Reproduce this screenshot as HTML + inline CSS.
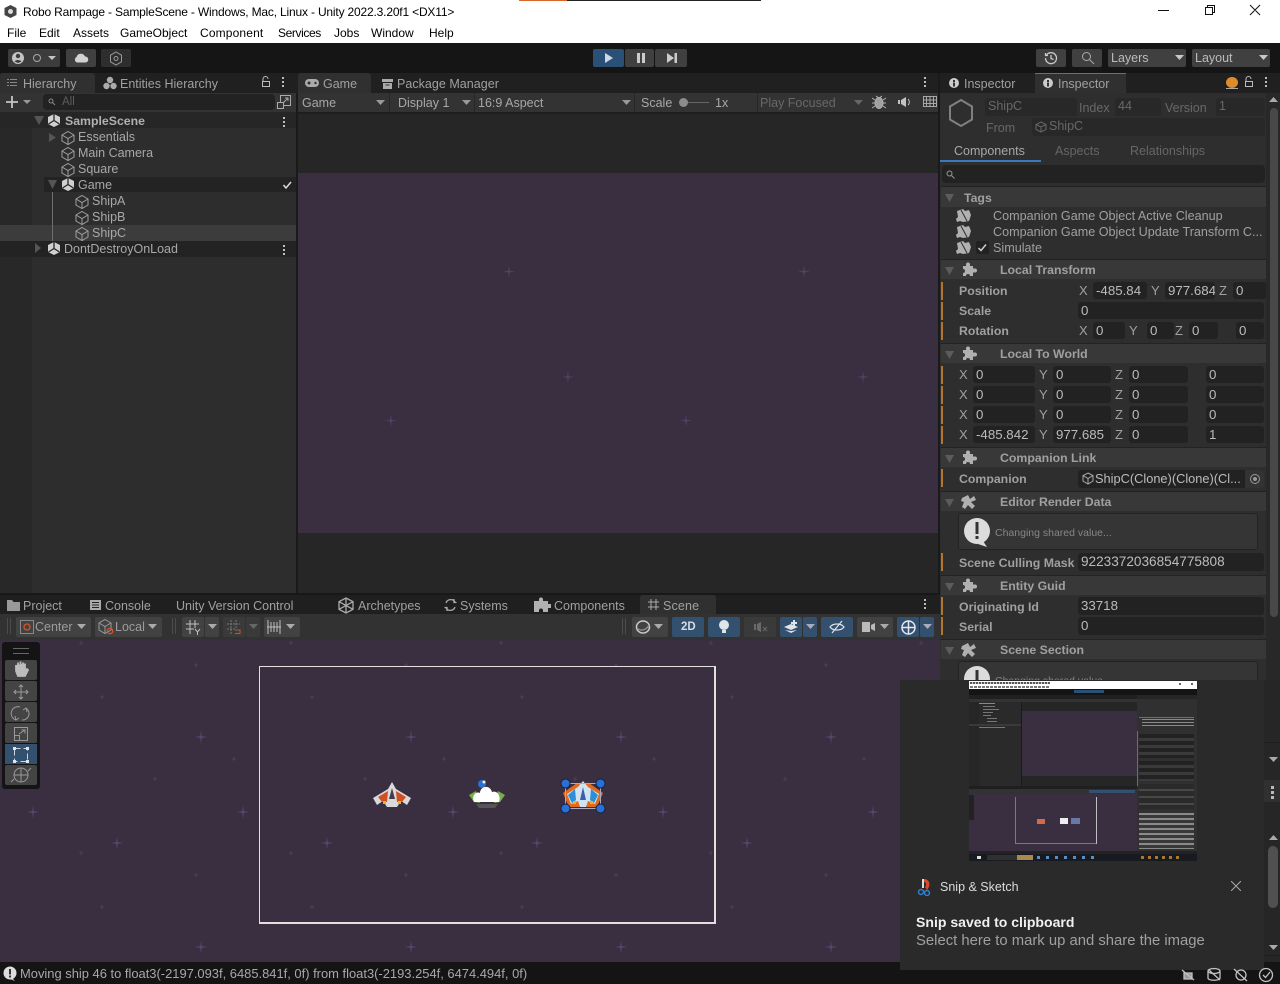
<!DOCTYPE html>
<html><head><meta charset="utf-8"><style>
html,body{margin:0;padding:0;background:#202020}
#r{position:relative;width:1280px;height:984px;overflow:hidden;background:#202020;font:12.5px/16px "Liberation Sans",sans-serif;color:#a8a8a8}
#r div,#r>svg{position:absolute}
.t{white-space:nowrap}
.m{color:#000;font-size:12px}
.f{background:#222;height:17px;border-radius:3px;color:#bcbcbc;line-height:17px;padding-left:3px;box-sizing:border-box;white-space:nowrap;overflow:hidden;font-size:13.3px}
.b{background:#4a4a4a;border-radius:2px}
.h{left:941px;width:325px;height:20px;background:#383838;border-top:1px solid #222;box-sizing:border-box}
.o{left:941px;width:2px;height:18px;background:#b3762a}
.l{font-weight:bold;color:#a0a0a0;white-space:nowrap;font-size:12.3px}
.x{font-weight:normal;color:#a0a0a0;white-space:nowrap;font-size:13px}
.s{color:#a0a0a0;white-space:nowrap;font-size:12.6px}
</style></head><body><div id="r">

<!-- title -->
<div style="left:0;top:0;width:1280px;height:43px;background:#fff"></div>
<div style="left:519px;top:0;width:48px;height:1px;background:#d5672b"></div>
<div style="left:567px;top:0;width:194px;height:1px;background:#222"></div>
<svg style="left:3px;top:4px" width="15" height="15" viewBox="0 0 15 15"><path d="M7.500 1L13.500 4V11L7.500 14L1.500 11V4Z" fill="#444"/><circle cx="7.500" cy="7.500" r="2.500" fill="#ddd"/></svg>
<div class="t m" style="left:23px;top:4px;letter-spacing:-.18px">Robo Rampage - SampleScene - Windows, Mac, Linux - Unity 2022.3.20f1 &lt;DX11&gt;</div>
<div class="t m" style="left:7px;top:25px">File</div>
<div class="t m" style="left:39px;top:25px">Edit</div>
<div class="t m" style="left:73px;top:25px">Assets</div>
<div class="t m" style="left:120px;top:25px">GameObject</div>
<div class="t m" style="left:200px;top:25px;letter-spacing:.15px">Component</div>
<div class="t m" style="left:278px;top:25px;letter-spacing:-.4px">Services</div>
<div class="t m" style="left:334px;top:25px">Jobs</div>
<div class="t m" style="left:371px;top:25px">Window</div>
<div class="t m" style="left:429px;top:25px">Help</div>
<svg style="left:1150px;top:0" width="130" height="20" viewBox="0 0 130 20" fill="none" stroke="#111"><path d="M8 10.500H19M55.500 7.500H62.500V14.500H55.500ZM57.500 7.500V5.500H64.500V12.500H62.500M100 5L110 15M110 5L100 15"/></svg>

<!-- toolbar -->
<div style="left:0;top:43px;width:1280px;height:30px;background:#151515"></div>
<div class="b" style="left:8px;top:49px;width:52px;height:18px;background:#3c3c3c"></div>
<svg style="left:12px;top:51px" width="48" height="14" viewBox="0 0 48 14"><circle cx="6" cy="7" r="6" fill="#c4c4c4"/><circle cx="6" cy="5" r="2.200" fill="#3c3c3c"/><path d="M2.500 10.500C4 8.500 8 8.500 9.500 10.500L6 12Z" fill="#3c3c3c"/><circle cx="25" cy="7" r="3.500" fill="none" stroke="#a8a8a8"/><path d="M36 5H44L40 9Z" fill="#c4c4c4"/></svg>
<div class="b" style="left:66px;top:49px;width:30px;height:18px;background:#404040"></div>
<svg style="left:73px;top:52px" width="16" height="11" viewBox="0 0 14 11"><path d="M3 10.500A3 3 0 0 1 2.500 5A4.500 4.500 0 0 1 11 4.500A3 3 0 0 1 11.500 10.500Z" fill="#d2d2d2"/></svg>
<div class="b" style="left:101px;top:49px;width:30px;height:18px;background:#2e2e2e"></div>
<svg style="left:109px;top:51px" width="14" height="15" viewBox="0 0 14 15" fill="none" stroke="#999"><path d="M7 1L12.500 4.200V10.800L7 14L1.500 10.800V4.200Z"/><circle cx="7" cy="7.500" r="2"/></svg>
<div style="left:593px;top:49px;width:31px;height:18px;background:#2a5078;border-radius:2px"></div>
<svg style="left:604px;top:52px" width="10" height="12"><path d="M1 1L9 6L1 11Z" fill="#cfd8e2"/></svg>
<div class="b" style="left:625px;top:49px;width:29px;height:18px;background:#404040"></div>
<div style="left:637px;top:53px;width:3px;height:10px;background:#ccc"></div><div style="left:642px;top:53px;width:3px;height:10px;background:#ccc"></div>
<div class="b" style="left:655px;top:49px;width:32px;height:18px;background:#404040"></div>
<svg style="left:666px;top:52px" width="12" height="12"><path d="M1 1L8 6L1 11Z" fill="#ccc"/><rect x="8.500" y="1" width="2.500" height="10" fill="#ccc"/></svg>
<div class="b" style="left:1036px;top:49px;width:30px;height:18px;background:#404040"></div>
<svg style="left:1044px;top:51px" width="14" height="14" viewBox="0 0 14 14" fill="none" stroke="#c8c8c8" stroke-width="1.300"><path d="M2.500 4A5.500 5.500 0 1 1 1.500 7M1.500 2V4.500H4M7 4V7.500L9.500 8.500"/></svg>
<div class="b" style="left:1072px;top:49px;width:30px;height:18px;background:#404040"></div>
<svg style="left:1081px;top:51px" width="14" height="14" fill="none" stroke="#aaa"><circle cx="5.500" cy="5.500" r="4"/><path d="M8.500 8.500L13 13"/></svg>
<div class="b" style="left:1108px;top:49px;width:78px;height:18px;background:#404040"></div>
<div class="t" style="left:1111px;top:50px;color:#bbb">Layers</div>
<svg style="left:1175px;top:55px" width="9" height="6"><path d="M0 0H9L4.500 5Z" fill="#c8c8c8"/></svg>
<div class="b" style="left:1192px;top:49px;width:78px;height:18px;background:#404040"></div>
<div class="t" style="left:1195px;top:50px;color:#bbb">Layout</div>
<svg style="left:1259px;top:55px" width="9" height="6"><path d="M0 0H9L4.500 5Z" fill="#c8c8c8"/></svg>

<!-- hierarchy tabs -->
<div style="left:0;top:73px;width:297px;height:20px;background:#202020"></div>
<div style="left:0;top:73px;width:95px;height:20px;background:#303030;border-radius:3px 3px 0 0"></div>
<svg style="left:7px;top:78px" width="11" height="10" stroke="#888"><path d="M0 1.500H2M3 1.500H10M0 4.500H2M3 4.500H10M0 7.500H2M3 7.500H10"/></svg>
<div class="t" style="left:23px;top:76px;color:#a0a0a0">Hierarchy</div>
<svg style="left:103px;top:76px" width="14" height="14"><circle cx="7" cy="4" r="3.200" fill="#aaa"/><circle cx="3.500" cy="10" r="3.200" fill="#aaa"/><circle cx="10.500" cy="10" r="3.200" fill="#aaa"/></svg>
<div class="t" style="left:120px;top:76px;color:#a0a0a0">Entities Hierarchy</div>
<svg style="left:261px;top:76px" width="10" height="12" fill="none" stroke="#bbb"><path d="M2 5V3A2.500 2.500 0 0 1 7 3"/><rect x="1.500" y="5.500" width="7" height="5"/></svg>
<svg style="left:281px;top:77px" width="4" height="12" fill="#bbb"><rect x="1" y="0" width="2" height="2"/><rect x="1" y="4" width="2" height="2"/><rect x="1" y="8" width="2" height="2"/></svg>
<div style="left:0;top:93px;width:297px;height:19px;background:#333"></div>
<svg style="left:6px;top:96px" width="26" height="12"><path d="M0 6H12M6 0V12" stroke="#c4c4c4" stroke-width="1.800"/><path d="M17 4H25L21 8Z" fill="#999"/></svg>
<div style="left:43px;top:94px;width:232px;height:16px;background:#222;border-radius:4px"></div>
<svg style="left:48px;top:98px" width="10" height="8" fill="none" stroke="#888"><circle cx="3" cy="3" r="2"/><path d="M4.500 4.500L7 7"/></svg>
<div class="t" style="left:62px;top:94px;color:#5e5e5e;font-size:11.500px">All</div>
<svg style="left:277px;top:95px" width="14" height="14" fill="none" stroke="#aaa"><rect x="3.500" y=".5" width="10" height="10"/><rect x=".5" y="7.500" width="6" height="6" fill="#333"/><path d="M6 8L11 3M8 3H11V6"/></svg>
<!-- hierarchy tree -->
<div style="left:0;top:112px;width:297px;height:481px;background:#2d2d2d"></div>
<div style="left:0;top:112px;width:32px;height:481px;background:#282828"></div>
<div style="left:0;top:112px;width:296px;height:16px;background:#262626"></div>
<div style="left:44px;top:177px;width:252px;height:15px;background:#232323"></div>
<div style="left:0;top:225px;width:296px;height:16px;background:#3c3c3c"></div>
<div style="left:0;top:241px;width:296px;height:16px;background:#232323"></div>
<div style="left:296px;top:93px;width:2px;height:500px;background:#1a1a1a"></div>
<div style="left:52px;top:192px;width:1px;height:49px;background:#6e6e6e"></div>

<svg style="left:0;top:112px" width="296" height="146" fill="#555">
<path d="M34 4H44L39 13Z"/>
<path d="M49 21V30L56 25.500Z"/>
<path d="M48 68H57L52.500 77Z"/>
<path d="M35 131V141L41 136Z"/>
<g fill="none" stroke="#a0a0a0">
<path d="M68 19.500L74 23V29L68 32.500L62 29V23ZM62 23L68 26.500L74 23M68 26.500V32.500"/>
<path d="M68 35.500L74 39V45L68 48.500L62 45V39ZM62 39L68 42.500L74 39M68 42.500V48.500"/>
<path d="M68 51.500L74 55V61L68 64.500L62 61V55ZM62 55L68 58.500L74 55M68 58.500V64.500"/>
<path d="M82 83.500L88 87V93L82 96.500L76 93V87ZM76 87L82 90.500L88 87M82 90.500V96.500"/>
<path d="M82 99.500L88 103V109L82 112.500L76 109V103ZM76 103L82 106.500L88 103M82 106.500V112.500"/>
<path d="M82 115.500L88 119V125L82 128.500L76 125V119ZM76 119L82 122.500L88 119M82 122.500V128.500"/>
</g>
<g fill="#d0d0d0">
<path d="M54 2L60 5V12L54 15L48 12V5Z"/><path d="M68 66L74 69V76L68 79L62 76V69Z"/><path d="M54 130L60 133V140L54 143L48 140V133Z"/>
</g>
<g fill="none" stroke="#262626" stroke-width="1.300"><path d="M54 8.500V2M54 8.500L48.500 12M54 8.500L59.500 12"/><path d="M68 72.500V66M68 72.500L62.500 76M68 72.500L73.500 76"/><path d="M54 136.500V130M54 136.500L48.500 140M54 136.500L59.500 140"/></g>
<path d="M283.500 73L286 76L291 70" fill="none" stroke="#ddd" stroke-width="1.500"/>
<g fill="#c0c0c0"><rect x="283" y="5" width="2" height="2"/><rect x="283" y="9" width="2" height="2"/><rect x="283" y="13" width="2" height="2"/><rect x="283" y="133" width="2" height="2"/><rect x="283" y="137" width="2" height="2"/><rect x="283" y="141" width="2" height="2"/></g>
</svg>
<div class="t" style="left:65px;top:113px;font-weight:bold;color:#b0b0b0;font-size:12.300px">SampleScene</div>
<div class="t" style="left:78px;top:129px">Essentials</div>
<div class="t" style="left:78px;top:145px">Main Camera</div>
<div class="t" style="left:78px;top:161px">Square</div>
<div class="t" style="left:78px;top:177px">Game</div>
<div class="t" style="left:92px;top:193px">ShipA</div>
<div class="t" style="left:92px;top:209px">ShipB</div>
<div class="t" style="left:92px;top:225px">ShipC</div>
<div class="t" style="left:64px;top:241px">DontDestroyOnLoad</div>

<!-- game panel -->
<div style="left:298px;top:73px;width:642px;height:20px;background:#202020"></div>
<div style="left:298px;top:73px;width:73px;height:20px;background:#303030;border-radius:3px 3px 0 0"></div>
<svg style="left:305px;top:79px" width="14" height="9"><rect x="0" y="0" width="14" height="8" rx="4" fill="#aaa"/><circle cx="4" cy="4" r="1.500" fill="#333"/><circle cx="10.500" cy="4" r="1.200" fill="#333"/></svg>
<div class="t" style="left:323px;top:76px;color:#a0a0a0">Game</div>
<svg style="left:382px;top:79px" width="11" height="10" fill="#aaa"><rect x="0" y="0" width="11" height="3"/><rect x="1" y="4" width="9" height="6"/><rect x="3.500" y="5.500" width="4" height="1" fill="#333"/></svg>
<div class="t" style="left:397px;top:76px;color:#a0a0a0;letter-spacing:.03px">Package Manager</div>
<svg style="left:923px;top:77px" width="4" height="12" fill="#bbb"><rect x="1" y="0" width="2" height="2"/><rect x="1" y="4" width="2" height="2"/><rect x="1" y="8" width="2" height="2"/></svg>
<div style="left:298px;top:93px;width:642px;height:19px;background:#333"></div>
<div style="left:298px;top:112px;width:642px;height:3px;background:linear-gradient(#1b1b1b,#262626)"></div>
<div class="t" style="left:302px;top:95px">Game</div>
<svg style="left:376px;top:100px" width="9" height="6"><path d="M0 0H9L4.500 5Z" fill="#999"/></svg>
<div style="left:389px;top:93px;width:1px;height:19px;background:#272727"></div>
<div class="t" style="left:398px;top:95px">Display 1</div>
<svg style="left:462px;top:100px" width="9" height="6"><path d="M0 0H9L4.500 5Z" fill="#999"/></svg>
<div style="left:474px;top:93px;width:1px;height:19px;background:#272727"></div>
<div class="t" style="left:478px;top:95px">16:9 Aspect</div>
<svg style="left:622px;top:100px" width="9" height="6"><path d="M0 0H9L4.500 5Z" fill="#999"/></svg>
<div style="left:634px;top:93px;width:1px;height:19px;background:#272727"></div>
<div class="t" style="left:641px;top:95px">Scale</div>
<div style="left:684px;top:102px;width:25px;height:1px;background:#666"></div>
<div style="left:679px;top:98px;width:9px;height:9px;border-radius:50%;background:#8c8c8c"></div>
<div class="t" style="left:715px;top:95px">1x</div>
<div style="left:757px;top:93px;width:1px;height:19px;background:#272727"></div>
<div class="t" style="left:760px;top:95px;color:#686868">Play Focused</div>
<svg style="left:854px;top:100px" width="9" height="6"><path d="M0 0H9L4.500 5Z" fill="#666"/></svg>
<svg style="left:871px;top:95px" width="16" height="15" fill="none" stroke="#b0b0b0"><ellipse cx="8" cy="8" rx="4" ry="5.500" fill="#a0a0a0"/><path d="M1 3L4 5M15 3L12 5M1 8H4M15 8H12M1 13L4 11M15 13L12 11M5 1L8 3L11 1"/></svg>
<svg style="left:898px;top:96px" width="14" height="12" fill="#c2c2c2"><rect x="0" y="4" width="2" height="4"/><path d="M3 4L8 1V11L3 8Z"/><path d="M10 3A4 4 0 0 1 10 9" fill="none" stroke="#c2c2c2"/></svg>
<svg style="left:923px;top:96px" width="15" height="12" fill="none" stroke="#a8a8a8"><rect x=".5" y=".5" width="13" height="10"/><path d="M0 4H14M0 7.500H14M3.500 1V10M7 1V10M10.500 1V10"/></svg>

<div style="left:298px;top:115px;width:642px;height:478px;background:#262626"></div>
<div style="left:298px;top:173px;width:642px;height:360px;background:#3a2e41"></div>
<svg style="left:298px;top:173px" width="642" height="360"><defs>
<pattern id="gp" width="210" height="210" patternUnits="userSpaceOnUse" patternTransform="translate(223.600 -37.700) scale(1.405)">
<g fill="#524468"><path id="g1" transform="translate(201 97)" d="M0 -4.500L.5 -.5L4.500 0L.5 .5L0 4.500L-.5 .5L-4.500 0L-.5 -.5Z"/><path transform="translate(33 172)" d="M0 -4.500L.5 -.5L4.500 0L.5 .5L0 4.500L-.5 .5L-4.500 0L-.5 -.5Z"/><path transform="translate(117 203)" d="M0 -4.500L.5 -.5L4.500 0L.5 .5L0 4.500L-.5 .5L-4.500 0L-.5 -.5Z"/></g>
</pattern></defs><rect width="642" height="360" fill="url(#gp)"/></svg>
<div style="left:938px;top:73px;width:2px;height:520px;background:#1a1a1a"></div>
<div style="left:0;top:593px;width:940px;height:2px;background:#181818"></div>

<!-- inspector -->
<div style="left:940px;top:73px;width:340px;height:20px;background:#202020"></div>
<div style="left:1035px;top:73px;width:91px;height:20px;background:#303030;border-top:1px solid #3a79bb;box-sizing:border-box"></div>
<svg style="left:949px;top:78px" width="10" height="10"><circle cx="5" cy="5" r="5" fill="#ccc"/><rect x="4" y="2" width="2" height="2" fill="#333"/><rect x="4" y="4.500" width="2" height="4" fill="#333"/></svg>
<div class="t" style="left:964px;top:76px;color:#a0a0a0">Inspector</div>
<svg style="left:1043px;top:78px" width="10" height="10"><circle cx="5" cy="5" r="5" fill="#ccc"/><rect x="4" y="2" width="2" height="2" fill="#333"/><rect x="4" y="4.500" width="2" height="4" fill="#333"/></svg>
<div class="t" style="left:1058px;top:76px;color:#a0a0a0">Inspector</div>
<div style="left:1226px;top:77px;width:12px;height:11px;border-radius:50%;background:#de8b2c"></div>
<div style="left:1226px;top:88px;width:12px;height:1px;background:#aaa"></div>
<svg style="left:1244px;top:76px" width="10" height="12" fill="none" stroke="#bbb"><path d="M2 5V3A2.500 2.500 0 0 1 7 3"/><rect x="1.500" y="5.500" width="7" height="5"/></svg>
<svg style="left:1264px;top:77px" width="4" height="12" fill="#bbb"><rect x="1" y="0" width="2" height="2"/><rect x="1" y="4" width="2" height="2"/><rect x="1" y="8" width="2" height="2"/></svg>
<div style="left:940px;top:93px;width:340px;height:590px;background:#2e2e2e"></div>
<div style="left:1266px;top:93px;width:14px;height:590px;background:#282828"></div>
<svg style="left:1269px;top:97px" width="9" height="6"><path d="M0 5H9L4.500 0Z" fill="#aaa"/></svg>
<div style="left:1270px;top:108px;width:8px;height:509px;background:#484848;border-radius:4px"></div>
<svg style="left:948px;top:98px" width="26" height="30" fill="none" stroke="#808080" stroke-width="2"><path d="M13 2L24 8.500V21.500L13 28L2 21.500V8.500Z"/></svg>
<div class="f" style="left:985px;top:98px;width:92px;height:18px;color:#686868;background:#282828;font-size:12.500px">ShipC</div>
<div class="t" style="left:1079px;top:100px;color:#686868">Index</div>
<div class="f" style="left:1115px;top:98px;width:46px;height:18px;color:#686868;background:#282828;font-size:12.500px">44</div>
<div class="t" style="left:1165px;top:100px;color:#686868">Version</div>
<div class="f" style="left:1216px;top:98px;width:49px;height:18px;color:#686868;background:#282828;font-size:12.500px">1</div>
<div class="t" style="left:986px;top:120px;color:#686868">From</div>
<div class="f" style="left:1032px;top:118px;width:233px;height:18px;color:#686868;background:#282828;padding-left:17px;font-size:12.500px">ShipC</div>
<svg style="left:1035px;top:121px" width="12" height="12" fill="none" stroke="#686868"><path d="M6 1L11 3.500V8.500L6 11L1 8.500V3.500ZM1 3.500L6 6L11 3.500M6 6V11"/></svg>
<div class="t" style="left:954px;top:143px;color:#a8a8a8">Components</div>
<div class="t" style="left:1055px;top:143px;color:#666">Aspects</div>
<div class="t" style="left:1130px;top:143px;color:#666">Relationships</div>
<div style="left:940px;top:160px;width:101px;height:2px;background:#3a79bb"></div>
<div style="left:942px;top:165px;width:323px;height:18px;background:#222;border-radius:4px"></div>
<svg style="left:946px;top:170px" width="9" height="9" fill="none" stroke="#999"><circle cx="3.500" cy="3.500" r="2.500"/><path d="M5.500 5.500L8.500 8.500"/></svg>

<!-- section headers -->
<div class="h" style="top:186px;height:21px"></div><div class="l" style="left:964px;top:190px">Tags</div>
<div class="h" style="top:259px"></div><div class="l" style="left:1000px;top:262px">Local Transform</div>
<div class="h" style="top:343px"></div><div class="l" style="left:1000px;top:346px">Local To World</div>
<div class="h" style="top:447px"></div><div class="l" style="left:1000px;top:450px">Companion Link</div>
<div class="h" style="top:491px"></div><div class="l" style="left:1000px;top:494px">Editor Render Data</div>
<div class="h" style="top:575px"></div><div class="l" style="left:1000px;top:578px">Entity Guid</div>
<div class="h" style="top:639px"></div><div class="l" style="left:1000px;top:642px">Scene Section</div>
<svg style="left:945px;top:189px" width="32" height="470" fill="#5c5c5c">
<path d="M0 5H9L4.500 13Z"/><path d="M0 78H9L4.500 86Z"/><path d="M0 162H9L4.500 170Z"/><path d="M0 266H9L4.500 274Z"/><path d="M0 310H9L4.500 318Z"/><path d="M0 394H9L4.500 402Z"/><path d="M0 458H9L4.500 466Z"/>
<g fill="#b0b0b0"><path d="M18 77H21V75.500A2 2 0 0 1 25 75.500V77H28V79.500H30A2 2 0 0 1 30 83.500H28V87H25A2 2 0 0 0 21 87H18V84A2 2 0 0 0 18 80Z"/>
<path d="M18 161H21V159.500A2 2 0 0 1 25 159.500V161H28V163.500H30A2 2 0 0 1 30 167.500H28V171H25A2 2 0 0 0 21 171H18V168A2 2 0 0 0 18 164Z"/>
<path d="M18 265H21V263.500A2 2 0 0 1 25 263.500V265H28V267.500H30A2 2 0 0 1 30 271.500H28V275H25A2 2 0 0 0 21 275H18V272A2 2 0 0 0 18 268Z"/>
<path d="M18 393H21V391.500A2 2 0 0 1 25 391.500V393H28V395.500H30A2 2 0 0 1 30 399.500H28V403H25A2 2 0 0 0 21 403H18V400A2 2 0 0 0 18 396Z"/>
<path d="M17 309L23 306L25 310L29 307L31 311L26 313L30 317L27 320L23 316L20 320L17 318L19 313L16 312Z"/>
<path d="M17 457L23 454L25 458L29 455L31 459L26 461L30 465L27 468L23 464L20 468L17 466L19 461L16 460Z"/></g>
</svg>
<svg style="left:955px;top:208px" width="18" height="48" fill="#b0b0b0"><path d="M2 3L8 1L10 3L14 2L16 7L14 13L8 14L5 13L2 14L1 11L3 9Z"/><path d="M2 19L8 17L10 19L14 18L16 23L14 29L8 30L5 29L2 30L1 27L3 25Z"/><path d="M2 35L8 33L10 35L14 34L16 39L14 45L8 46L5 45L2 46L1 43L3 41Z"/><path d="M6 2L12 13M6 18L12 29M6 34L12 45" stroke="#2e2e2e" fill="none"/></svg>
<div class="s" style="left:993px;top:208px">Companion Game Object Active Cleanup</div>
<div class="s" style="left:993px;top:224px">Companion Game Object Update Transform C...</div>
<div style="left:976px;top:241px;width:13px;height:13px;background:#222;border-radius:2px"></div>
<svg style="left:977px;top:243px" width="11" height="9"><path d="M1.500 5L4 7.500L9 1.500" fill="none" stroke="#ccc" stroke-width="1.500"/></svg>
<div class="s" style="left:993px;top:240px">Simulate</div>

<!-- rows -->
<div class="o" style="top:282px"></div><div class="o" style="top:302px"></div><div class="o" style="top:322px"></div>
<div class="l" style="left:959px;top:283px">Position</div>
<div class="l" style="left:959px;top:303px">Scale</div>
<div class="l" style="left:959px;top:323px">Rotation</div>
<div class="x" style="left:1079px;top:283px">X</div><div class="f" style="left:1093px;top:282px;width:54px">-485.84</div>
<div class="x" style="left:1151px;top:283px">Y</div><div class="f" style="left:1165px;top:282px;width:50px">977.684</div>
<div class="x" style="left:1219px;top:283px">Z</div><div class="f" style="left:1233px;top:282px;width:33px">0</div>
<div class="f" style="left:1078px;top:302px;width:186px">0</div>
<div class="x" style="left:1079px;top:323px">X</div><div class="f" style="left:1093px;top:322px;width:32px">0</div>
<div class="x" style="left:1129px;top:323px">Y</div><div class="f" style="left:1147px;top:322px;width:27px">0</div>
<div class="x" style="left:1175px;top:323px">Z</div><div class="f" style="left:1189px;top:322px;width:29px">0</div>
<div class="f" style="left:1236px;top:322px;width:28px">0</div>

<div class="o" style="top:366px"></div><div class="o" style="top:386px"></div><div class="o" style="top:406px"></div><div class="o" style="top:426px"></div>
<div class="x" style="left:959px;top:367px">X</div><div class="f" style="left:973px;top:366px;width:62px">0</div><div class="x" style="left:1039px;top:367px">Y</div><div class="f" style="left:1053px;top:366px;width:58px">0</div><div class="x" style="left:1115px;top:367px">Z</div><div class="f" style="left:1129px;top:366px;width:59px">0</div><div class="f" style="left:1206px;top:366px;width:58px">0</div>
<div class="x" style="left:959px;top:387px">X</div><div class="f" style="left:973px;top:386px;width:62px">0</div><div class="x" style="left:1039px;top:387px">Y</div><div class="f" style="left:1053px;top:386px;width:58px">0</div><div class="x" style="left:1115px;top:387px">Z</div><div class="f" style="left:1129px;top:386px;width:59px">0</div><div class="f" style="left:1206px;top:386px;width:58px">0</div>
<div class="x" style="left:959px;top:407px">X</div><div class="f" style="left:973px;top:406px;width:62px">0</div><div class="x" style="left:1039px;top:407px">Y</div><div class="f" style="left:1053px;top:406px;width:58px">0</div><div class="x" style="left:1115px;top:407px">Z</div><div class="f" style="left:1129px;top:406px;width:59px">0</div><div class="f" style="left:1206px;top:406px;width:58px">0</div>
<div class="x" style="left:959px;top:427px">X</div><div class="f" style="left:973px;top:426px;width:62px">-485.842</div><div class="x" style="left:1039px;top:427px">Y</div><div class="f" style="left:1053px;top:426px;width:58px">977.685</div><div class="x" style="left:1115px;top:427px">Z</div><div class="f" style="left:1129px;top:426px;width:59px">0</div><div class="f" style="left:1206px;top:426px;width:58px">1</div>

<div class="o" style="top:469px"></div>
<div class="l" style="left:959px;top:471px">Companion</div>
<div class="f" style="left:1078px;top:470px;width:186px;height:18px;padding-left:17px;font-size:12.800px">ShipC(Clone)(Clone)(Cl...</div>
<div style="left:1245px;top:470px;width:19px;height:18px;background:#333;border-radius:0 3px 3px 0"></div>
<svg style="left:1082px;top:472px" width="12" height="13" fill="none" stroke="#aaa"><path d="M6 1L11 3.500V9L6 12L1 9V3.500ZM1 3.500L6 6.500L11 3.500M6 6.500V12"/></svg>
<svg style="left:1249px;top:473px" width="12" height="12" fill="none" stroke="#999"><circle cx="6" cy="6" r="4.500"/><circle cx="6" cy="6" r="1.500" fill="#999"/></svg>

<div style="left:958px;top:513px;width:300px;height:37px;background:#353535;border:1px solid #222;border-radius:3px;box-sizing:border-box"></div>
<svg style="left:963px;top:517px" width="28" height="30"><circle cx="14" cy="14" r="13" fill="#dcdcdc"/><path d="M20 24L24 30L15 27Z" fill="#dcdcdc"/><rect x="12.500" y="5" width="3" height="12" fill="#333"/><rect x="12.500" y="19" width="3" height="3" fill="#333"/></svg>
<div class="t" style="left:995px;top:525px;font-size:10.500px;color:#868686">Changing shared value...</div>
<div class="o" style="top:553px"></div>
<div class="l" style="left:959px;top:555px">Scene Culling Mask</div>
<div class="f" style="left:1078px;top:553px;width:186px;height:18px;font-size:13.600px">9223372036854775808</div>
<div class="o" style="top:597px"></div><div class="o" style="top:617px"></div>
<div class="l" style="left:959px;top:599px">Originating Id</div>
<div class="l" style="left:959px;top:619px">Serial</div>
<div class="f" style="left:1078px;top:597px;width:186px;height:18px">33718</div>
<div class="f" style="left:1078px;top:617px;width:186px;height:18px">0</div>
<div style="left:958px;top:661px;width:300px;height:24px;background:#353535;border:1px solid #222;border-radius:3px;box-sizing:border-box"></div>
<svg style="left:963px;top:665px" width="28" height="18"><circle cx="14" cy="14" r="13" fill="#dcdcdc"/><rect x="12.500" y="5" width="3" height="12" fill="#333"/></svg>
<div class="t" style="left:995px;top:673px;font-size:10.500px;color:#868686">Changing shared value...</div>

<!-- bottom panel tabs -->
<div style="left:0;top:595px;width:940px;height:20px;background:#1f1f1f"></div>
<svg style="left:7px;top:600px" width="14" height="11"><path d="M0 0H5L6.500 2H13V11H0Z" fill="#999"/></svg>
<div class="t" style="left:23px;top:598px;color:#a0a0a0">Project</div>
<svg style="left:90px;top:600px" width="11" height="11"><rect width="11" height="10" fill="#aaa"/><path d="M2 2.500H9M2 5H9M2 7.500H9" stroke="#222"/></svg>
<div class="t" style="left:105px;top:598px;color:#a0a0a0">Console</div>
<div class="t" style="left:176px;top:598px;color:#a0a0a0">Unity Version Control</div>
<svg style="left:338px;top:597px" width="16" height="17" fill="none" stroke="#aaa" stroke-width="1.300"><path d="M8 1L15 4.700V12.300L8 16L1 12.300V4.700ZM8 1V16M1 4.700L15 12.300M15 4.700L1 12.300"/></svg>
<div class="t" style="left:358px;top:598px;color:#a0a0a0">Archetypes</div>
<svg style="left:444px;top:598px" width="13" height="14" fill="none" stroke="#aaa" stroke-width="1.300"><path d="M2 5A5 5 0 0 1 11 4M11 9A5 5 0 0 1 2 10M10 1V4.500H12.500M3 13V9.500H.5"/></svg>
<div class="t" style="left:460px;top:598px;color:#a0a0a0">Systems</div>
<svg style="left:533px;top:597px" width="18" height="16" fill="#b0b0b0"><path d="M1 4H6V2.500A2 2 0 0 1 10 2.500V4H15V7H18V11H15V15H10V13.500A2 2 0 0 0 6 13.500V15H1Z"/></svg>
<div class="t" style="left:554px;top:598px;color:#a0a0a0">Components</div>
<div style="left:640px;top:595px;width:76px;height:20px;background:#303030;border-radius:3px 3px 0 0"></div>
<svg style="left:648px;top:599px" width="11" height="11" stroke="#aaa" fill="none"><path d="M3 0V11M8 0V11M0 3H11M0 8H11"/></svg>
<div class="t" style="left:663px;top:598px;color:#a0a0a0;letter-spacing:.15px">Scene</div>
<svg style="left:923px;top:599px" width="4" height="12" fill="#bbb"><rect x="1" y="0" width="2" height="2"/><rect x="1" y="4" width="2" height="2"/><rect x="1" y="8" width="2" height="2"/></svg>

<!-- scene toolbar -->
<div style="left:0;top:614px;width:940px;height:26px;background:#323232"></div>
<div style="left:7px;top:618px;width:2px;height:16px;border-left:1px solid #4c4c4c;border-right:1px solid #4c4c4c"></div>
<div class="b" style="left:16px;top:617px;width:75px;height:20px;background:#424242"></div>
<svg style="left:20px;top:618px" width="15" height="18" fill="none"><rect x=".5" y="2.500" width="13" height="13" stroke="#888"/><circle cx="7" cy="9" r="3" stroke="#d8542a" stroke-width="1.300"/></svg>
<div class="t" style="left:35px;top:619px;color:#9c9c9c">Center</div>
<svg style="left:77px;top:624px" width="9" height="6"><path d="M0 0H9L4.500 5Z" fill="#aaa"/></svg>
<div class="b" style="left:95px;top:617px;width:67px;height:20px;background:#424242"></div>
<svg style="left:98px;top:618px" width="18" height="18" fill="none" stroke="#999"><path d="M7 1.500L13 5V12L7 15.500L1 12V5ZM1 5L7 8.500L13 5M7 8.500V15.500"/><circle cx="12" cy="13" r="2.700" stroke="#d8542a" stroke-width="1.300"/></svg>
<div class="t" style="left:115px;top:619px;color:#9c9c9c">Local</div>
<svg style="left:148px;top:624px" width="9" height="6"><path d="M0 0H9L4.500 5Z" fill="#aaa"/></svg>
<div style="left:172px;top:618px;width:2px;height:16px;border-left:1px solid #4c4c4c;border-right:1px solid #4c4c4c"></div>
<div class="b" style="left:182px;top:617px;width:22px;height:20px;background:#424242"></div>
<div class="b" style="left:205px;top:617px;width:14px;height:20px;background:#424242"></div>
<svg style="left:186px;top:620px" width="16" height="15" fill="none" stroke="#c0c0c0"><path d="M4 0V14M9 0V8M0 4H13M0 9H8"/><path d="M9 9L11.500 12L14 9M11.500 12V15"/></svg>
<svg style="left:208px;top:624px" width="9" height="6"><path d="M0 0H9L4.500 5Z" fill="#aaa"/></svg>
<div class="b" style="left:223px;top:617px;width:22px;height:20px;background:#3a3a3a"></div>
<div class="b" style="left:246px;top:617px;width:14px;height:20px;background:#3a3a3a"></div>
<svg style="left:227px;top:620px" width="16" height="15" fill="none" stroke="#777"><path d="M4 0V14M9 0V8M0 4H13M0 9H8" stroke-dasharray="2 1"/><path d="M8 10H13V13.500H8" stroke="#c9532b"/></svg>
<svg style="left:249px;top:624px" width="9" height="6"><path d="M0 0H9L4.500 5Z" fill="#666"/></svg>
<div class="b" style="left:264px;top:617px;width:36px;height:20px;background:#424242"></div>
<svg style="left:267px;top:620px" width="15" height="14" stroke="#c0c0c0"><path d="M1 0V14M4 2V12M7 2V12M10 2V12M13 0V14M0 7H14"/></svg>
<svg style="left:286px;top:624px" width="9" height="6"><path d="M0 0H9L4.500 5Z" fill="#aaa"/></svg>

<div style="left:622px;top:618px;width:2px;height:16px;border-left:1px solid #4c4c4c;border-right:1px solid #4c4c4c"></div>
<div class="b" style="left:632px;top:617px;width:36px;height:20px;background:#424242"></div>
<svg style="left:635px;top:620px" width="16" height="14" fill="none" stroke="#ccc" stroke-width="1.500"><ellipse cx="8" cy="7" rx="6.500" ry="6"/><path d="M2 8C5 11 11 11 14 5" stroke="#888"/></svg>
<svg style="left:654px;top:624px" width="9" height="6"><path d="M0 0H9L4.500 5Z" fill="#aaa"/></svg>
<div style="left:672px;top:617px;width:32px;height:20px;background:#34506f;border-radius:2px"></div>
<div class="t" style="left:681px;top:619px;font-weight:bold;font-size:11.500px;color:#d5dce4">2D</div>
<div style="left:708px;top:617px;width:32px;height:20px;background:#34506f;border-radius:2px"></div>
<svg style="left:718px;top:619px" width="12" height="16" fill="#dfe4ea"><circle cx="6" cy="6" r="5"/><rect x="4" y="11" width="4" height="3"/></svg>
<div class="b" style="left:744px;top:617px;width:32px;height:20px;background:#3a3a3a"></div>
<svg style="left:754px;top:621px" width="14" height="12" fill="#6a6a6a"><rect x="0" y="3" width="2" height="6"/><path d="M3 3L7 1V11L3 9Z"/><path d="M9 6L13 10M13 6L9 10" stroke="#6a6a6a" fill="none"/></svg>
<div style="left:780px;top:617px;width:22px;height:20px;background:#34506f;border-radius:2px"></div>
<div style="left:803px;top:617px;width:14px;height:20px;background:#34506f;border-radius:2px"></div>
<svg style="left:784px;top:620px" width="15" height="14" fill="#dfe4ea"><path d="M0 7L7 4L14 7L7 10Z"/><path d="M1 10L7 13L13 10L7 11Z"/><path d="M9 0H11V2H13V4H11V6H9V4H7V2H9Z"/></svg>
<svg style="left:806px;top:624px" width="9" height="6"><path d="M0 0H9L4.500 5Z" fill="#aab"/></svg>
<div style="left:821px;top:617px;width:32px;height:20px;background:#34506f;border-radius:2px"></div>
<svg style="left:829px;top:620px" width="16" height="14" fill="none" stroke="#dfe4ea" stroke-width="1.200"><path d="M1 7C4 3 12 3 15 7C12 11 4 11 1 7ZM3 13L13 1"/></svg>
<div class="b" style="left:857px;top:617px;width:36px;height:20px;background:#424242"></div>
<svg style="left:862px;top:622px" width="13" height="10" fill="#bbb"><rect width="8" height="10"/><path d="M9 3L13 1V9L9 7Z"/></svg>
<svg style="left:880px;top:624px" width="9" height="6"><path d="M0 0H9L4.500 5Z" fill="#aaa"/></svg>
<div style="left:897px;top:617px;width:22px;height:20px;background:#34506f;border-radius:2px"></div>
<div style="left:920px;top:617px;width:14px;height:20px;background:#34506f;border-radius:2px"></div>
<svg style="left:901px;top:620px" width="15" height="15" fill="none" stroke="#e4e8ee" stroke-width="1.500"><circle cx="7.500" cy="7.500" r="6.500"/><path d="M1 7.500H14M7.500 1V14"/></svg>
<svg style="left:923px;top:624px" width="9" height="6"><path d="M0 0H9L4.500 5Z" fill="#aab"/></svg>

<!-- scene view -->
<div style="left:0;top:640px;width:940px;height:322px;background:#3a2e41"></div>
<svg style="left:0;top:640px" width="940" height="322"><defs>
<pattern id="sp" width="210" height="210" patternUnits="userSpaceOnUse">
<g fill="#5a4a72"><path transform="translate(201 97)" d="M0 -6.500L.7 -.7L6.500 0L.7 .7L0 6.500L-.7 .7L-6.500 0L-.7 -.7Z"/><path transform="translate(33 172)" d="M0 -6.500L.7 -.7L6.500 0L.7 .7L0 6.500L-.7 .7L-6.500 0L-.7 -.7Z"/><path transform="translate(117 203)" d="M0 -6.500L.7 -.7L6.500 0L.7 .7L0 6.500L-.7 .7L-6.500 0L-.7 -.7Z"/></g>
<g fill="#4c3f5e"><path transform="translate(81 3)" d="M0 -3L.6 -.6L3 0L.6 .6L0 3L-.6 .6L-3 0L-.6 -.6Z"/><path transform="translate(196 25)" d="M0 -3L.6 -.6L3 0L.6 .6L0 3L-.6 .6L-3 0L-.6 -.6Z"/><path transform="translate(102 57)" d="M0 -3L.6 -.6L3 0L.6 .6L0 3L-.6 .6L-3 0L-.6 -.6Z"/><path transform="translate(24 119)" d="M0 -3L.6 -.6L3 0L.6 .6L0 3L-.6 .6L-3 0L-.6 -.6Z"/><path transform="translate(155 139)" d="M0 -3L.6 -.6L3 0L.6 .6L0 3L-.6 .6L-3 0L-.6 -.6Z"/></g>
</pattern></defs><rect width="940" height="322" fill="url(#sp)"/></svg>
<div style="left:259px;top:666px;width:457px;height:258px;border:1px solid #e0e0e0;border-right-width:2px;border-bottom-width:2px;box-sizing:border-box"></div>

<!-- tool overlay -->
<div style="left:2px;top:642px;width:38px;height:147px;background:#141414;border-radius:3px"></div>
<div style="left:13px;top:648px;width:16px;height:4px;border-top:1px solid #666;border-bottom:1px solid #666"></div>
<div class="b" style="left:5px;top:660px;width:32px;height:20px;background:#444"></div>
<div class="b" style="left:5px;top:681px;width:32px;height:20px;background:#444"></div>
<div class="b" style="left:5px;top:702px;width:32px;height:20px;background:#444"></div>
<div class="b" style="left:5px;top:723px;width:32px;height:20px;background:#444"></div>
<div style="left:5px;top:744px;width:32px;height:20px;background:#34506f"></div>
<div class="b" style="left:5px;top:765px;width:32px;height:20px;background:#444"></div>
<svg style="left:5px;top:660px" width="32" height="125" fill="none" stroke="#bdbdbd">
<path d="M11 5V11L13 16H20L23 10L22 9L20 11V3.500M13 9V2.500M15.500 9V1.500M18 9V2.500" stroke-width="1.800" fill="#bdbdbd"/>
<path d="M16 25V39M9 32H23M14 27L16 25L18 27M14 37L16 39L18 37M11 30L9 32L11 34M21 30L23 32L21 34" stroke="#9a9a9a"/>
<path d="M11 60A6.500 6.500 0 0 1 15 47M21 48A6.500 6.500 0 0 1 17 60M10 56L11 60L14 58M22 52L21 48L18 50" stroke="#9a9a9a"/>
<rect x="9.500" y="67.500" width="13" height="13" stroke="#9a9a9a"/><path d="M9.500 75.500H14.500V80.500M14 74L20 70M16.500 70H20V73.500" stroke="#9a9a9a"/>
<rect x="9.500" y="88.500" width="13" height="13" stroke="#cdd6e0" stroke-dasharray="6 3"/>
<g fill="#dfe4ea" stroke="none"><rect x="8" y="87" width="3" height="3"/><rect x="21" y="87" width="3" height="3"/><rect x="8" y="100" width="3" height="3"/><rect x="21" y="100" width="3" height="3"/></g>
<circle cx="16" cy="115" r="7" stroke="#9a9a9a"/><path d="M9 115H23M16 108V122M6 122L9 119M26 108L23 111" stroke="#9a9a9a"/>
</svg>

<!-- ships -->
<svg style="left:370px;top:778px" width="44" height="32" viewBox="0 0 44 32">
<path d="M3 20L18 11L22 4L26 11L41 20L37 27L31 23L27 29H17L13 23L7 27Z" fill="#d9d9d9"/>
<path d="M8 19L18 13L17 24L12 24Z M36 19L26 13L27 24L32 24Z" fill="#d24f24"/>
<path d="M22 10L25 21H19Z" fill="#443b4f"/>
<rect x="13" y="23" width="3" height="3" fill="#e0b52a"/><rect x="28" y="23" width="3" height="3" fill="#e0b52a"/>
</svg>
<svg style="left:468px;top:778px" width="38" height="30" viewBox="0 0 38 30">
<circle cx="14" cy="6" r="4" fill="#2b6fd0"/><circle cx="16" cy="4" r="1.500" fill="#eee"/>
<path d="M1 17L8 13L12 25L6 24Z M37 17L30 13L26 25L32 24Z" fill="#77b04a"/>
<path d="M8 26H30L27 30H11Z" fill="#555"/>
<path d="M6 24C3 17 9 13 12 15C12 8 22 6 24 14C30 12 33 19 31 24Z" fill="#fff"/>
</svg>
<svg style="left:559px;top:776px" width="48" height="38" viewBox="0 0 48 38">
<path d="M4 17L18 7H30L44 17L38 31H28L24 29L20 31H10Z" fill="#e2691f"/>
<path d="M8 18L19 11L24 5L29 11L40 18L36 28L29 25L27 31H21L19 25L12 28Z" fill="#cfe4f0"/>
<path d="M9 19L16 13L17 24L13 27Z M39 19L32 13L31 24L35 27Z" fill="#2d8fd8"/>
<path d="M24 11L27 24H21Z" fill="#3e5fa8"/>
<rect x="14" y="25" width="3" height="3" fill="#e0b52a"/><rect x="31" y="25" width="3" height="3" fill="#e0b52a"/>
<path d="M6.500 7.500H41.500V32.500H6.500Z" fill="none" stroke="#aab" stroke-width="1"/>
<g fill="#2a6ed8" stroke="#16243a" stroke-width="1"><circle cx="6.500" cy="7.500" r="4.500"/><circle cx="41.500" cy="7.500" r="4.500"/><circle cx="6.500" cy="32.500" r="4.500"/><circle cx="41.500" cy="32.500" r="4.500"/></g>
</svg>

<!-- status bar -->
<div style="left:0;top:962px;width:1280px;height:22px;background:#141414"></div>
<svg style="left:3px;top:966px" width="14" height="15"><circle cx="7" cy="7" r="6.500" fill="#ddd"/><path d="M9 12L12 15L7 13Z" fill="#ddd"/><rect x="6" y="3" width="2" height="5.500" fill="#333"/><rect x="6" y="9.500" width="2" height="2" fill="#333"/></svg>
<div class="t" style="left:20px;top:966px;color:#a8a8a8;font-size:12.930px">Moving ship 46 to float3(-2197.093f, 6485.841f, 0f) from float3(-2193.254f, 6474.494f, 0f)</div>

<!-- right of inspector -->
<div style="left:1266px;top:683px;width:14px;height:279px;background:#282828"></div>

<!-- toast -->
<div style="left:900px;top:680px;width:364px;height:290px;background:#2a2a2a"></div>
<div style="left:1264px;top:680px;width:16px;height:282px;background:#262626"></div>
<div style="left:1264px;top:742px;width:16px;height:1px;background:#1e1e1e"></div>
<svg style="left:1268px;top:756px" width="11" height="8"><path d="M1 1H10L5.500 6Z" fill="#aaa"/></svg>
<div style="left:1264px;top:780px;width:16px;height:22px;background:#303030"></div>
<div style="left:1271px;top:786px;width:3px;height:3px;background:#bbb"></div>
<div style="left:1271px;top:791px;width:3px;height:3px;background:#bbb"></div>
<div style="left:1271px;top:796px;width:3px;height:3px;background:#bbb"></div>
<svg style="left:1269px;top:835px" width="9" height="6"><path d="M0 5H9L4.500 0Z" fill="#aaa"/></svg>
<div style="left:1268px;top:846px;width:10px;height:62px;background:#505050;border-radius:5px"></div>
<svg style="left:1269px;top:945px" width="9" height="6"><path d="M0 0H9L4.500 5Z" fill="#aaa"/></svg>
<div style="left:1264px;top:955px;width:16px;height:1px;background:#1e1e1e"></div>

<!-- thumbnail -->
<div style="left:969px;top:681px;width:228px;height:180px;background:#262626;overflow:hidden">
 <div style="left:0;top:0;width:228px;height:8px;background:#fff"></div>
 <div style="left:1px;top:1px;width:80px;height:2px;background:repeating-linear-gradient(90deg,#555 0 2px,#ccc 2px 3px)"></div>
 <div style="left:1px;top:5px;width:80px;height:2px;background:repeating-linear-gradient(90deg,#777 0 3px,#fff 3px 4px)"></div>
 <div style="left:210px;top:2px;width:2px;height:2px;background:#666"></div>
 <div style="left:222px;top:2px;width:2px;height:2px;background:#666"></div>
 <div style="left:0;top:8px;width:228px;height:6px;background:#141414"></div>
 <div style="left:105px;top:9px;width:30px;height:3px;background:#2a5078"></div>
 <div style="left:0;top:14px;width:168px;height:4px;background:#202020"></div>
 <div style="left:0;top:18px;width:228px;height:3px;background:#333"></div>
 <div style="left:0;top:21px;width:52px;height:84px;background:#2a2a2a"></div>
 <div style="left:0;top:21px;width:10px;height:84px;background:#262626"></div>
 <div style="left:10px;top:22px;width:16px;height:1px;background:#888"></div>
 <div style="left:14px;top:25px;width:12px;height:1px;background:#777"></div>
 <div style="left:14px;top:28px;width:16px;height:1px;background:#777"></div>
 <div style="left:14px;top:31px;width:10px;height:1px;background:#777"></div>
 <div style="left:14px;top:34px;width:8px;height:1px;background:#777"></div>
 <div style="left:18px;top:37px;width:10px;height:1px;background:#777"></div>
 <div style="left:18px;top:40px;width:10px;height:1px;background:#777"></div>
 <div style="left:0;top:43px;width:52px;height:2px;background:#3a3a3a"></div>
 <div style="left:10px;top:46px;width:26px;height:1px;background:#777"></div>
 <div style="left:52px;top:21px;width:1px;height:84px;background:#1a1a1a"></div>
 <div style="left:53px;top:30px;width:115px;height:65px;background:#3a2e41"></div>
 <div style="left:53px;top:21px;width:115px;height:9px;background:#262626"></div>
 <div style="left:53px;top:95px;width:115px;height:10px;background:#262626"></div>
 <div style="left:168px;top:18px;width:60px;height:152px;background:#303030"></div>
 <div style="left:170px;top:36px;width:55px;height:1px;background:#3a79bb"></div>
 <div style="left:173px;top:38px;width:52px;height:8px;background:repeating-linear-gradient(#8a8a8a 0 1px,#303030 1px 3px)"></div>
 <div style="left:170px;top:53px;width:55px;height:24px;background:repeating-linear-gradient(#222 0 4px,#3a3a3a 4px 7px)"></div>
 <div style="left:170px;top:80px;width:55px;height:20px;background:repeating-linear-gradient(#222 0 4px,#3a3a3a 4px 7px)"></div>
 <div style="left:170px;top:103px;width:55px;height:25px;background:repeating-linear-gradient(#2a2a2a 0 5px,#484848 5px 7px)"></div>
 <div style="left:170px;top:132px;width:55px;height:36px;background:repeating-linear-gradient(#8a8a8a 0 2px,#383838 2px 5px)"></div>
 <div style="left:168px;top:50px;width:1px;height:55px;background:#8a6a30"></div>
 <div style="left:0;top:105px;width:168px;height:3px;background:#1f1f1f"></div>
 <div style="left:0;top:108px;width:168px;height:5px;background:#323232"></div>
 <div style="left:120px;top:109px;width:46px;height:3px;background:#34506f"></div>
 <div style="left:0;top:113px;width:168px;height:57px;background:#3a2e41"></div>
 <div style="left:0;top:114px;width:5px;height:25px;background:#222"></div>
 <div style="left:46px;top:116px;width:1px;height:47px;background:#7a7a82"></div>
 <div style="left:46px;top:162px;width:82px;height:1px;background:#7a7a82"></div>
 <div style="left:127px;top:116px;width:1px;height:47px;background:#bdbdc4"></div>
 <div style="left:68px;top:138px;width:8px;height:5px;background:#d26a50"></div>
 <div style="left:91px;top:137px;width:8px;height:6px;background:#eee"></div>
 <div style="left:102px;top:137px;width:9px;height:6px;background:#6a78a8"></div>
 <div style="left:0;top:170px;width:228px;height:3px;background:#222"></div>
 <div style="left:0;top:173px;width:228px;height:7px;background:#171a20"></div>
 <div style="left:8px;top:175px;width:4px;height:3px;background:#ddd"></div>
 <div style="left:18px;top:174px;width:30px;height:5px;background:#303030"></div>
 <div style="left:48px;top:174px;width:16px;height:5px;background:#a88a50"></div>
 <div style="left:68px;top:175px;width:60px;height:3px;background:repeating-linear-gradient(90deg,#5a8fc5 0 3px,#171a20 3px 9px)"></div>
 <div style="left:172px;top:175px;width:40px;height:3px;background:repeating-linear-gradient(90deg,#aa7733 0 3px,#171a20 3px 7px)"></div>
</div>
<svg style="left:917px;top:878px" width="15" height="18"><path d="M7 1C13 1 14 8 10 12L8 9C10 7 9 4 7 4Z" fill="#d8492a"/><rect x="5" y="1" width="2" height="9" fill="#ddd"/><circle cx="4" cy="14" r="2.500" fill="none" stroke="#2f7fd0" stroke-width="1.500"/><circle cx="10" cy="15" r="2.500" fill="none" stroke="#2f7fd0" stroke-width="1.500"/></svg>
<div class="t" style="left:940px;top:879px;color:#dcdcdc;font-size:12.500px">Snip &amp; Sketch</div>
<svg style="left:1231px;top:881px" width="10" height="10" stroke="#aaa"><path d="M0 0L10 10M10 0L0 10"/></svg>
<div class="t" style="left:916px;top:913px;color:#f0f0f0;font-weight:bold;font-size:14.050px;line-height:18px">Snip saved to clipboard</div>
<div class="t" style="left:916px;top:932px;color:#a0a0a0;font-size:14.850px;line-height:18px">Select here to mark up and share the image</div>

<!-- status right icons -->
<svg style="left:1180px;top:967px" width="96" height="16" fill="none" stroke="#c2c2c2" stroke-width="1.300"><path d="M2 3L14 13M4 6H12V12H4Z" fill="#999"/><ellipse cx="34" cy="4" rx="6" ry="2.500"/><path d="M28 4V11C28 14 40 14 40 11V4M29 3L40 13"/><circle cx="61" cy="8" r="5"/><path d="M54 2L67 14"/><circle cx="86" cy="8" r="6.500"/><path d="M83 8L85.500 10.500L90 5"/></svg>
</div></body></html>
